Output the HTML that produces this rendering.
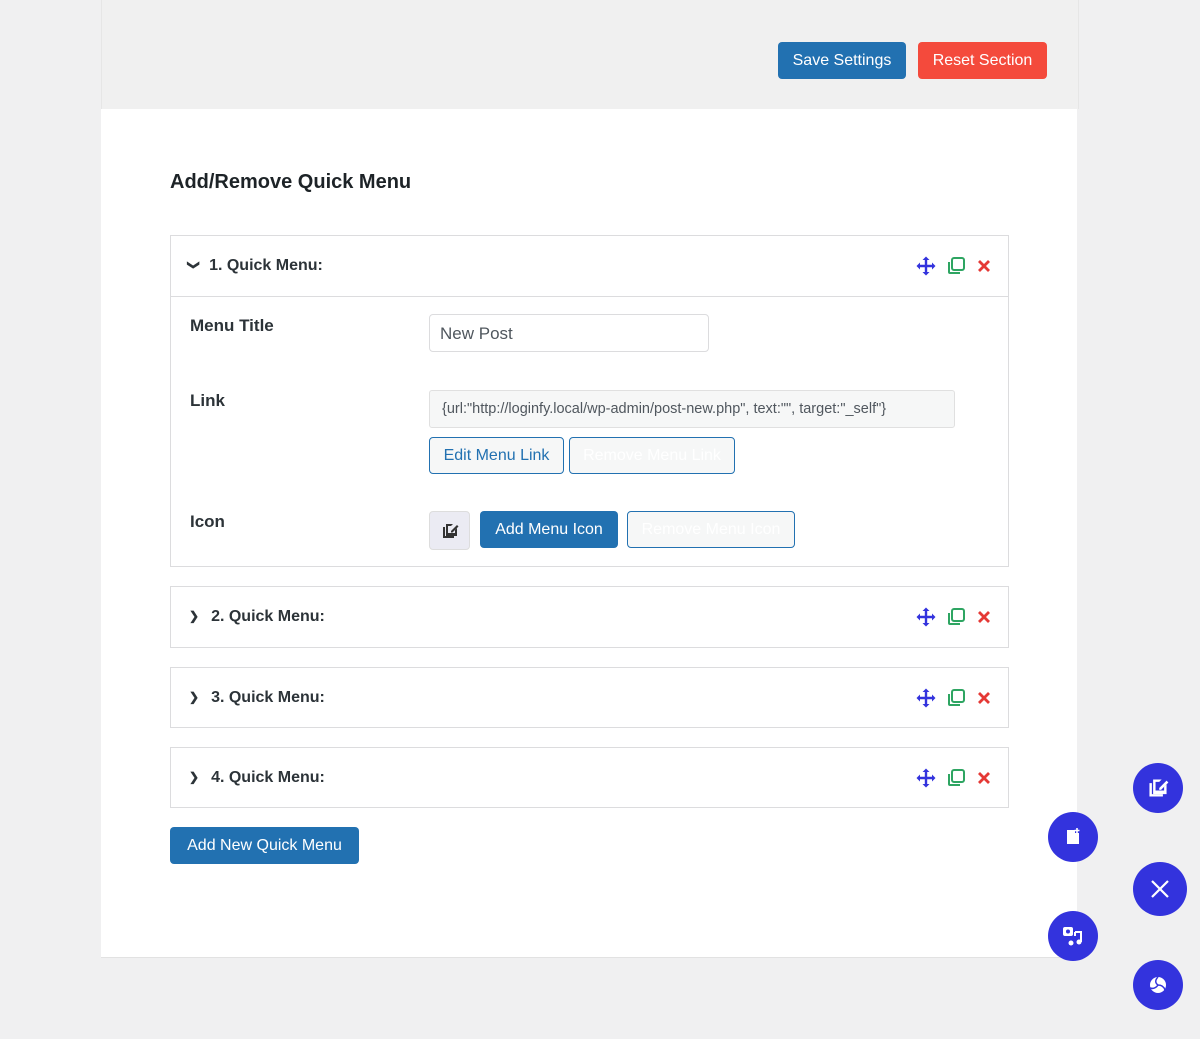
<!DOCTYPE html>
<html><head><style>
body{margin:0;width:1200px;height:1039px;background:#f0f0f1;font-family:"Liberation Sans",sans-serif;position:relative;overflow:hidden;color:#1d2327}
.top{position:absolute;left:101px;top:0;width:976px;height:109px;background:#f0f0f0;border-left:1px solid #e6e6e6;border-right:1px solid #e6e6e6}
.panel{position:absolute;left:101px;top:109px;width:976px;height:848px;background:#fff;border-bottom:1px solid #e2e2e2}
.btn{position:absolute;border-radius:4px;font-size:16px;display:flex;align-items:center;justify-content:center;box-sizing:border-box}
.item{position:absolute;left:170px;width:839px;border:1px solid #dcdcde;box-sizing:border-box;background:#fff}
.hd{height:60px;display:flex;align-items:center;padding-left:18px;font-weight:bold;font-size:16px;color:#2c3338;position:relative}
.icons{position:absolute;right:16px;top:20px;display:flex;gap:10px;align-items:center}
.lbl{position:absolute;left:19px;font-weight:bold;font-size:17px;color:#2c3338}
.fab{position:absolute;border-radius:50%;background:#3333dd;display:flex;align-items:center;justify-content:center}
.chev{display:inline-block;font-size:12px;margin-right:12px;margin-top:-3px}
</style></head><body>
<div class="top"></div>
<div class="btn" style="left:778px;top:42px;width:128px;height:37px;background:#2271b1;color:#fff">Save Settings</div>
<div class="btn" style="left:918px;top:42px;width:129px;height:37px;background:#f44a3c;color:#fff">Reset Section</div>
<div class="panel"></div>
<div style="position:absolute;left:170px;top:171px;font-size:20px;font-weight:bold;color:#1d2327">Add/Remove Quick Menu</div>

<div class="item" style="top:235px;height:332px">
 <div class="hd" style="border-bottom:1px solid #dcdcde"><span class="chev" style="transform:rotate(90deg);margin-right:10px">&#10095;</span>1. Quick Menu:
  <div class="icons">ICONS</div></div>
 <div class="lbl" style="top:80px">Menu Title</div>
 <div class="lbl" style="top:155px">Link</div>
 <div class="lbl" style="top:276px">Icon</div>
 <div style="position:absolute;left:258px;top:78px;width:280px;height:38px;border:1px solid #dcdcde;border-radius:4px;box-sizing:border-box;padding:9px 10px;font-size:17px;color:#50575e">New Post</div>
 <div style="position:absolute;left:258px;top:154px;width:526px;height:38px;border:1px solid #e0e0e0;background:#f6f7f7;border-radius:3px;box-sizing:border-box;padding:10px 12px;font-size:14.5px;color:#50575e;white-space:nowrap">{url:"http://loginfy.local/wp-admin/post-new.php", text:"", target:"_self"}</div>
 <div class="btn" style="left:258px;top:201px;width:135px;height:37px;border:1px solid #2271b1;color:#2271b1;background:#f6f7f7">Edit Menu Link</div>
 <div class="btn" style="left:398px;top:201px;width:166px;height:37px;border:1px solid #2271b1;color:#fff;background:#f6f7f7">Remove Menu Link</div>
 <div class="btn" style="left:258px;top:275px;width:41px;height:39px;background:#ebebf3;border:1px solid #ddd">
  <svg width="18" height="18" viewBox="0 0 18 18"><path d="M2 5h2v9h9v2H2z" fill="#333"/><path d="M5 2h7l-2 2H7v7h7V8l2-2v8H5z" fill="#333"/><path d="M10 9l6-6 1.5 1.5-6 6H10z" fill="#333"/></svg></div>
 <div class="btn" style="left:309px;top:275px;width:138px;height:37px;background:#2271b1;color:#fff">Add Menu Icon</div>
 <div class="btn" style="left:456px;top:275px;width:168px;height:37px;border:1px solid #2271b1;color:#fff;background:#f6f7f7">Remove Menu Icon</div>
</div>

<div class="item" style="top:586px;height:62px"><div class="hd"><span class="chev">&#10095;</span>2. Quick Menu:<div class="icons">ICONS</div></div></div>
<div class="item" style="top:667px;height:61px"><div class="hd"><span class="chev">&#10095;</span>3. Quick Menu:<div class="icons">ICONS</div></div></div>
<div class="item" style="top:747px;height:61px"><div class="hd"><span class="chev">&#10095;</span>4. Quick Menu:<div class="icons">ICONS</div></div></div>

<div class="btn" style="left:170px;top:827px;width:189px;height:37px;background:#2271b1;color:#fff">Add New Quick Menu</div>

<div class="fab" style="left:1133px;top:763px;width:50px;height:50px"><svg width="22" height="22" viewBox="0 0 18 18"><path d="M2 5h2v9h9v2H2z" fill="#fff"/><path d="M5 2h7l-2 2H7v7h7V8l2-2v8H5z" fill="#fff"/><path d="M10 9l6-6 1.5 1.5-6 6H10z" fill="#fff"/></svg></div>
<div class="fab" style="left:1048px;top:812px;width:50px;height:50px"><svg width="20" height="20" viewBox="0 0 20 20"><path d="M4 3h8v3h4v11H4z" fill="#fff"/><path d="M14 1v5M11.5 3.5h5" stroke="#fff" stroke-width="1.6"/></svg></div>
<div class="fab" style="left:1133px;top:862px;width:54px;height:54px"><svg width="22" height="22" viewBox="0 0 22 22"><path d="M3 3l16 16M19 3L3 19" stroke="#fff" stroke-width="2.2"/></svg></div>
<div class="fab" style="left:1048px;top:911px;width:50px;height:50px"><svg width="24" height="24" viewBox="0 0 24 24"><rect x="2" y="3" width="10" height="9" rx="2" fill="#fff"/><circle cx="7" cy="7.5" r="2" fill="#3333dd"/><circle cx="10" cy="19" r="2.5" fill="#fff"/><circle cx="18" cy="18" r="2.5" fill="#fff"/><path d="M14 8h6v10M14 8v4" stroke="#fff" stroke-width="2" fill="none"/></svg></div>
<div class="fab" style="left:1133px;top:960px;width:50px;height:50px"><svg width="18" height="18" viewBox="0 0 18 18"><circle cx="9" cy="9" r="8" fill="#fff"/><path d="M9 1c-3 3-3 6 0 8M9 9c4 0 6 2 7 5M9 9c-2 3-5 4-8 3" stroke="#3333dd" stroke-width="1.5" fill="none"/></svg></div>

<script>
var ic='<svg width="20" height="20" viewBox="0 0 20 20"><path d="M10 0.5l3.5 3.5h-2.3v4.8h4.8V6.5l3.5 3.5-3.5 3.5v-2.3h-4.8v4.8h2.3L10 19.5l-3.5-3.5h2.3v-4.8H4v2.3L0.5 10 4 6.5v2.3h4.8V4H6.5z" fill="#3333dd"/></svg><svg width="20" height="20" viewBox="0 0 20 20"><rect x="6" y="2" width="12" height="12" rx="2" fill="none" stroke="#2ea562" stroke-width="2"/><path d="M3 6v10a1 1 0 0 0 1 1h10" fill="none" stroke="#2ea562" stroke-width="2"/></svg><svg width="16" height="16" viewBox="0 0 16 16"><path d="M3 3l10 10M13 3L3 13" stroke="#e53935" stroke-width="2.8"/></svg>';
document.querySelectorAll('.icons').forEach(e=>e.innerHTML=ic);
</script>
</body></html>
